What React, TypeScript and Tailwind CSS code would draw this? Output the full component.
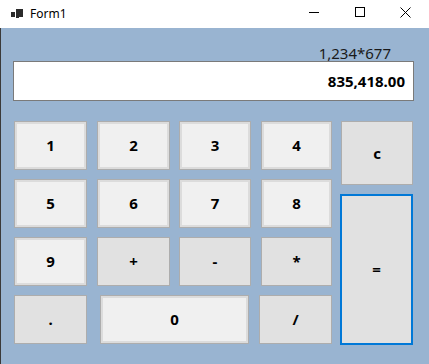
import type { ReactNode } from 'react';

type Tone = 'light' | 'dark' | 'focus';

function CalcButton({
    label,
    tone = 'light',
    className = '',
}: {
    label: ReactNode;
    tone?: Tone;
    className?: string;
}) {
    const toneClass =
        tone === 'light'
            ? 'border border-[#adadad] bg-[#f0f0f0] shadow-[inset_0_0_0_2px_#dcdcdc]'
            : tone === 'dark'
              ? 'border border-[#adadad] bg-[#e1e1e1]'
              : 'border-2 border-[#0078d7] bg-[#e1e1e1]';

    return (
        <button
            type="button"
            className={`flex shrink-0 items-center justify-center text-[15px] font-bold text-black ${toneClass} ${className}`}
        >
            {label}
        </button>
    );
}

function TitleBar() {
    return (
        <div className="flex h-[28px] items-center bg-white">
            <svg className="ml-[11px]" width="12" height="10" viewBox="0 0 12 10">
                <rect x="0" y="3" width="4" height="5" fill="#2b2b2b" />
                <rect x="5" y="0" width="7" height="8" fill="#2b2b2b" />
                <rect x="5" y="8" width="3" height="1" fill="#2b2b2b" />
            </svg>
            <span className="ml-[7px] text-[12px] text-black">Form1</span>
            <div className="ml-auto flex items-center">
                <svg width="46" height="28" viewBox="0 0 46 28">
                    <line x1="18" y1="12.5" x2="28" y2="12.5" stroke="#000" strokeWidth="1" />
                </svg>
                <svg width="46" height="28" viewBox="0 0 46 28">
                    <rect x="18.5" y="7.5" width="9" height="9" fill="none" stroke="#000" strokeWidth="1" />
                </svg>
                <svg width="46" height="28" viewBox="0 0 46 28">
                    <path d="M17.5 7.5 L27.5 17.5 M27.5 7.5 L17.5 17.5" stroke="#000" strokeWidth="1" />
                </svg>
            </div>
        </div>
    );
}

export default function App() {
    const rows: { label: string; tone: Tone }[][] = [
        [
            { label: '1', tone: 'light' },
            { label: '2', tone: 'light' },
            { label: '3', tone: 'light' },
            { label: '4', tone: 'light' },
        ],
        [
            { label: '5', tone: 'light' },
            { label: '6', tone: 'light' },
            { label: '7', tone: 'light' },
            { label: '8', tone: 'light' },
        ],
        [
            { label: '9', tone: 'light' },
            { label: '+', tone: 'dark' },
            { label: '-', tone: 'dark' },
            { label: '*', tone: 'dark' },
        ],
    ];
    const widths = ['w-[73px]', 'w-[73px] ml-[10px]', 'w-[72px] ml-[9px]', 'w-[71px] ml-[10px]'];

    return (
        <div
            className="h-[364px] w-[429px] overflow-hidden bg-[#99b4d1]"
            style={{ fontFamily: '"Noto Sans", "Open Sans", sans-serif' }}
        >
            <TitleBar />
            <div className="h-[336px] border-l border-[#3a3a3a]">
                <div className="flex h-[33px] items-end justify-end pr-[38px]">
                    <span className="text-[15px] leading-none text-[#1a1a1a]">1,234*677</span>
                </div>
                <div className="ml-[12px] flex h-[40px] w-[401px] items-center justify-end border border-[#7a7a7a] bg-white pr-[8px]">
                    <span className="text-[15px] font-bold text-black">835,418.00</span>
                </div>

                <div className="ml-[13px] mt-[20px] flex">
                    <div className="flex flex-col gap-[9px]">
                        {rows.map((row, i) => (
                            <div key={i} className="flex">
                                {row.map((b, j) => (
                                    <CalcButton
                                        key={b.label}
                                        label={b.label}
                                        tone={b.tone}
                                        className={`h-[49px] ${widths[j]}`}
                                    />
                                ))}
                            </div>
                        ))}
                        <div className="flex">
                            <CalcButton label="." tone="dark" className="h-[49px] w-[73px]" />
                            <CalcButton label="0" tone="light" className="ml-[13px] h-[49px] w-[149px]" />
                            <CalcButton label="/" tone="dark" className="ml-[10px] h-[49px] w-[73px]" />
                        </div>
                    </div>
                    <div className="ml-[8px] flex flex-col">
                        <CalcButton label="c" tone="dark" className="ml-[1px] h-[64px] w-[72px]" />
                        <CalcButton label="=" tone="focus" className="mt-[9px] h-[151px] w-[73px]" />
                    </div>
                </div>
            </div>
        </div>
    );
}
